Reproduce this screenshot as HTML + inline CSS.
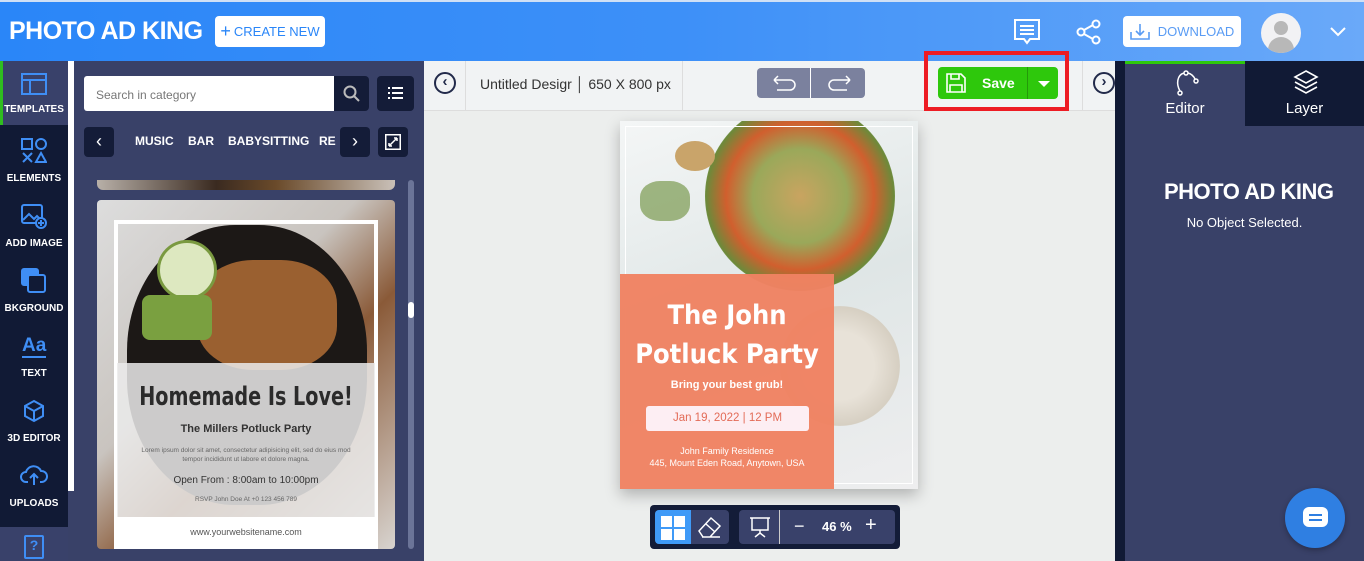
<!DOCTYPE html>
<html><head><meta charset="utf-8"><style>
*{box-sizing:border-box;margin:0;padding:0}
body{width:1364px;height:561px;overflow:hidden;font-family:"Liberation Sans",sans-serif;background:#eceeed;position:relative}
.a{position:absolute}
.hdr{left:0;top:0;width:1364px;height:61px;background:linear-gradient(90deg,#2a86f8 0%,#3d90f8 50%,#6aa9f9 100%);border-top:2px solid #cfe0f6}
.logo{color:#fff;font-weight:bold;font-size:25px;letter-spacing:-0.5px;font-family:"Liberation Sans",sans-serif;white-space:nowrap}
.btnw{background:#fff;border-radius:4px;color:#2a86f8;font-size:14px;display:flex;align-items:center;justify-content:center}
.side{left:0;top:61px;width:68px;height:500px;background:#111a35}
.si{position:absolute;left:0;width:68px;height:65px;color:#fff;font-size:10px;font-weight:bold;text-align:center}
.si svg{display:block;margin:12px auto 9px}
.panel{left:74px;top:61px;width:350px;height:500px;background:#394168}
.dk{background:#141c38;border-radius:4px}
.cat{color:#fff;font-size:12px;font-weight:bold}
</style></head><body>
<div class="a hdr"></div>
<div class="a logo" style="left:9px;top:17px">PHOTO AD KING</div>
<div class="a btnw" style="left:215px;top:16px;width:110px;height:31px;font-size:13px"><span style="font-size:18px;margin-right:3px">+</span>CREATE NEW</div>
<svg class="a" style="left:1013px;top:18px" width="28" height="28" viewBox="0 0 28 28" fill="none" stroke="#fff" stroke-width="2"><path d="M2 2h24v19H17l-3 4-3-4H2z"/><path d="M7 8h14M7 12h14M7 16h14"/></svg>
<svg class="a" style="left:1076px;top:19px" width="26" height="26" viewBox="0 0 26 26" fill="none" stroke="#fff" stroke-width="2"><circle cx="20" cy="5" r="3.5"/><circle cx="5" cy="13" r="3.5"/><circle cx="20" cy="21" r="3.5"/><path d="M8 11l9-5M8 15l9 5"/></svg>
<div class="a btnw" style="left:1123px;top:16px;width:118px;height:31px;color:#5a9cf4;font-size:13px"><svg width="20" height="18" viewBox="0 0 20 18" fill="none" stroke="#5a9cf4" stroke-width="1.6" style="margin-right:8px"><path d="M1 9v7h18V9M10 1v11M6 8l4 4 4-4"/></svg>DOWNLOAD</div>
<div class="a" style="left:1261px;top:13px;width:40px;height:40px;border-radius:50%;background:#f2f2f4;overflow:hidden"><div class="a" style="left:13px;top:8px;width:14px;height:14px;border-radius:50%;background:#b8b8b8"></div><div class="a" style="left:7px;top:24px;width:26px;height:18px;border-radius:13px 13px 0 0;background:#b8b8b8"></div></div>
<svg class="a" style="left:1330px;top:27px" width="16" height="10" viewBox="0 0 16 10" fill="none" stroke="#fff" stroke-width="2"><path d="M1 1l7 7 7-7"/></svg>

<div class="a side"></div>
<div class="a" style="left:0;top:61px;width:68px;height:64px;background:#39416a;border-left:3px solid #2fbd1f"></div>
<div class="si" style="top:61px"><svg width="26" height="22" viewBox="0 0 26 22" fill="none" stroke="#3f8ef5" stroke-width="2"><rect x="1" y="1" width="24" height="20"/><path d="M1 7h24M9 7v14"/></svg>TEMPLATES</div>
<div class="si" style="top:126px"><svg width="26" height="26" viewBox="0 0 26 26" fill="none" stroke="#3f8ef5" stroke-width="2"><rect x="1" y="1" width="10" height="10"/><circle cx="20" cy="6" r="5"/><path d="M2 15l9 9M11 15l-9 9M20 15l5 9h-10z"/></svg>ELEMENTS</div>
<div class="si" style="top:191px"><svg width="26" height="26" viewBox="0 0 26 26" fill="none" stroke="#3f8ef5" stroke-width="2"><rect x="1" y="2" width="20" height="18" rx="2"/><path d="M2 17l6-6 5 5 3-3 5 5"/><circle cx="20" cy="20" r="5" fill="#111a35"/><path d="M20 17v6M17 20h6"/></svg>ADD IMAGE</div>
<div class="si" style="top:256px"><svg width="26" height="26" viewBox="0 0 26 26" fill="none" stroke="#3f8ef5" stroke-width="2"><rect x="1" y="1" width="16" height="16" rx="2" fill="#3f8ef5"/><rect x="7" y="7" width="17" height="17" rx="2" fill="#111a35"/></svg>BKGROUND</div>
<div class="si" style="top:321px"><svg width="26" height="26" viewBox="0 0 26 26"><text x="1" y="18" fill="#3f8ef5" font-size="19" font-family="Liberation Sans">Aa</text><path d="M1 24h24" stroke="#3f8ef5" stroke-width="2"/></svg>TEXT</div>
<div class="si" style="top:386px"><svg width="26" height="26" viewBox="0 0 26 26" fill="none" stroke="#3f8ef5" stroke-width="2"><path d="M13 3l9 5v10l-9 5-9-5V8zM4 8l9 5 9-5M13 13v10"/></svg>3D EDITOR</div>
<div class="si" style="top:451px"><svg width="28" height="26" viewBox="0 0 28 26" fill="none" stroke="#3f8ef5" stroke-width="2"><path d="M8 19H6a5 5 0 010-10 8 8 0 0115-1 5 5 0 011 11h-2M14 22V11M10 15l4-4 4 4"/></svg>UPLOADS</div>
<div class="a" style="left:0;top:527px;width:68px;height:34px;background:#39416a"></div>
<div class="a" style="left:24px;top:535px;width:20px;height:24px;border:2px solid #3f8ef5;border-radius:2px;color:#3f8ef5;font-size:14px;font-weight:bold;text-align:center">?</div>
<div class="a" style="left:68px;top:61px;width:6px;height:430px;background:#fff"></div>
<div class="a" style="left:68px;top:491px;width:6px;height:70px;background:#394168"></div>

<div class="a panel"></div>
<div class="a" style="left:84px;top:76px;width:250px;height:35px;background:#fff;border-radius:3px 0 0 3px;color:#777;font-size:12px;padding:12px 12px">Search in category</div>
<div class="a dk" style="left:334px;top:76px;width:35px;height:35px;border-radius:0 4px 4px 0"><svg style="margin:9px" width="17" height="17" viewBox="0 0 17 17" fill="none" stroke="#bbb" stroke-width="2"><circle cx="7" cy="7" r="5.5"/><path d="M11 11l5 5"/></svg></div>
<div class="a dk" style="left:377px;top:76px;width:37px;height:35px"><svg style="margin:11px 11px" width="15" height="13" viewBox="0 0 15 13" fill="#fff"><rect x="0" y="0" width="2" height="2"/><rect x="4" y="0" width="11" height="2"/><rect x="0" y="5" width="2" height="2"/><rect x="4" y="5" width="11" height="2"/><rect x="0" y="10" width="2" height="2"/><rect x="4" y="10" width="11" height="2"/></svg></div>
<div class="a dk" style="left:84px;top:127px;width:30px;height:30px;color:#fff;font-size:18px;text-align:center;line-height:28px">‹</div>
<div class="a cat" style="left:135px;top:134px">MUSIC</div>
<div class="a cat" style="left:188px;top:134px">BAR</div>
<div class="a cat" style="left:228px;top:134px">BABYSITTING</div>
<div class="a cat" style="left:319px;top:134px">RE</div>
<div class="a dk" style="left:340px;top:127px;width:30px;height:30px;color:#fff;font-size:18px;text-align:center;line-height:28px">›</div>
<div class="a dk" style="left:378px;top:127px;width:30px;height:30px"><svg style="margin:7px" width="16" height="16" viewBox="0 0 16 16" fill="none" stroke="#fff" stroke-width="1.5"><rect x="0.75" y="0.75" width="14.5" height="14.5"/><path d="M4 12l8-8M4 12v-3M4 12h3M12 4h-3M12 4v3"/></svg></div>
<div class="a" style="left:97px;top:180px;width:298px;height:10px;border-radius:0 0 6px 6px;background:linear-gradient(90deg,#b8b0a8,#3a2a20 40%,#6a4a2a 60%,#c9c0b8)"></div>
<div class="a" style="left:97px;top:200px;width:298px;height:349px;border-radius:4px;overflow:hidden;background:linear-gradient(135deg,#ddd 0%,#c9c4bf 40%,#8a5a38 60%,#d8d4d0 100%)">
 <div class="a" style="left:30px;top:25px;width:240px;height:280px;border-radius:45%;background:#1c1816"></div>
 <div class="a" style="left:100px;top:60px;width:140px;height:110px;border-radius:40%;background:#9a6030"></div>
 <div class="a" style="left:60px;top:40px;width:60px;height:60px;border-radius:50%;background:#dde8c0;border:3px solid #7a9a40"></div>
 <div class="a" style="left:45px;top:95px;width:70px;height:45px;background:#7aa040;border-radius:8px"></div>
 <div class="a" style="left:17px;top:20px;width:264px;height:329px;border:4px solid #fff;border-bottom:none"></div>
 <div class="a" style="left:20px;top:163px;width:258px;height:154px;background:rgba(235,235,235,.85)"></div>
 <div class="a" style="left:20px;top:317px;width:258px;height:32px;background:#fff"></div>
 <div class="a" style="left:0;top:182px;width:298px;text-align:center;font-family:'DejaVu Sans Condensed','Liberation Sans Narrow',sans-serif;font-weight:bold;font-size:26px;color:#2b2b2b;transform:scaleX(.82)">Homemade Is Love!</div>
 <div class="a" style="left:0;top:223px;width:298px;text-align:center;font-size:11px;color:#333;font-weight:bold">The Millers Potluck Party</div>
 <div class="a" style="left:40px;top:246px;width:218px;text-align:center;font-size:6.5px;color:#666;line-height:9px">Lorem ipsum dolor sit amet, consectetur adipisicing elit, sed do eius mod tempor incididunt ut labore et dolore magna.</div>
 <div class="a" style="left:0;top:275px;width:298px;text-align:center;font-size:10px;color:#333">Open From : 8:00am to 10:00pm</div>
 <div class="a" style="left:0;top:296px;width:298px;text-align:center;font-size:6.5px;color:#666">RSVP John Doe At +0 123 456 789</div>
 <div class="a" style="left:0;top:327px;width:298px;text-align:center;font-size:9px;color:#555">www.yourwebsitename.com</div>
</div>
<div class="a" style="left:408px;top:180px;width:6px;height:369px;border-radius:3px;background:#6b7498"></div>
<div class="a" style="left:408px;top:302px;width:6px;height:16px;border-radius:3px;background:#fff"></div>

<div class="a" style="left:424px;top:61px;width:691px;height:50px;background:#f1f3f4;border-bottom:1px solid #ddd"></div>
<div class="a" style="left:465px;top:61px;width:1px;height:50px;background:#ddd"></div>
<div class="a" style="left:682px;top:61px;width:1px;height:50px;background:#ddd"></div>
<div class="a" style="left:1082px;top:61px;width:1px;height:50px;background:#ddd"></div>
<div class="a" style="left:434px;top:72px;width:22px;height:22px;border:2px solid #222a4a;border-radius:50%;font-size:15px;line-height:16px;text-align:center;color:#222a4a;font-weight:bold">‹</div>
<div class="a" style="left:1093px;top:72px;width:22px;height:22px;border:2px solid #222a4a;border-radius:50%;font-size:15px;line-height:16px;text-align:center;color:#222a4a;font-weight:bold">›</div>
<div class="a" style="left:480px;top:76px;font-size:14px;color:#333">Untitled Desigr │ 650 X 800 px</div>
<div class="a" style="left:757px;top:68px;width:108px;height:30px;background:#7b819e;border-radius:4px"></div>
<div class="a" style="left:810px;top:68px;width:1px;height:30px;background:#fff"></div>
<svg class="a" style="left:772px;top:75px" width="80" height="16" viewBox="0 0 80 16" fill="none" stroke="#fff" stroke-width="1.5"><path d="M2 5h16a5 5 0 010 10H5M2 5l4-4M2 5l4 4"/><path d="M78 5H62a5 5 0 000 10h13M78 5l-4-4M78 5l-4 4"/></svg>
<div class="a" style="left:924px;top:51px;width:145px;height:60px;border:4px solid #ed1c24"></div>
<div class="a" style="left:938px;top:67px;width:120px;height:32px;background:#2ec80c;border-radius:4px"></div>
<div class="a" style="left:1027px;top:67px;width:1px;height:32px;background:#249a0a"></div>
<svg class="a" style="left:946px;top:73px" width="20" height="20" viewBox="0 0 20 20" fill="none" stroke="#fff" stroke-width="1.6"><path d="M1 1h14l4 4v14H1z"/><path d="M5 1v5h8V1M4 19v-7h12v7"/></svg>
<div class="a" style="left:982px;top:75px;font-size:14px;font-weight:bold;color:#fff">Save</div>
<div class="a" style="left:1038px;top:81px;border-left:6px solid transparent;border-right:6px solid transparent;border-top:6px solid #fff"></div>

<div class="a" style="left:620px;top:121px;width:298px;height:368px;box-shadow:0 6px 14px rgba(0,0,0,.25);overflow:hidden;background:linear-gradient(160deg,#f4f6f6,#dfe6e6 50%,#eeeeef)">
 <div class="a" style="left:85px;top:-20px;width:190px;height:190px;border-radius:50%;background:radial-gradient(circle,#c9a460 0%,#9aa85a 35%,#d15f2e 55%,#6c8a3a 70%,#e9e6e0 76%,#5a74b0 78%,#e7e3df 80%)"></div>
 <div class="a" style="left:20px;top:60px;width:50px;height:40px;border-radius:40%;background:#7a9a50;opacity:.7"></div>
 <div class="a" style="left:55px;top:20px;width:40px;height:30px;border-radius:50%;background:#c9a46a"></div>
 <div class="a" style="left:160px;top:185px;width:120px;height:120px;border-radius:50%;background:radial-gradient(circle,#e8e2d8 40%,#d6cfc2 70%,transparent 72%)"></div>
 <div class="a" style="left:5px;top:5px;width:288px;height:358px;border:1.5px solid #fff"></div>
 <div class="a" style="left:0;top:153px;width:214px;height:215px;background:#f08262;opacity:.97"></div>
 <div class="a" style="left:0;top:175px;width:214px;text-align:center;color:#fff;font-weight:bold;font-size:27px;line-height:39px;font-family:'DejaVu Sans Condensed','Liberation Sans Narrow',sans-serif">The John<br>Potluck Party</div>
 <div class="a" style="left:0;top:258px;width:214px;text-align:center;color:#fff;font-weight:bold;font-size:11px">Bring your best grub!</div>
 <div class="a" style="left:26px;top:285px;width:163px;height:25px;background:#fdeef3;border-radius:3px;text-align:center;color:#e36b57;font-size:11.5px;line-height:25px">Jan 19, 2022 | 12 PM</div>
 <div class="a" style="left:0;top:324px;width:214px;text-align:center;color:#fff;font-size:9px;line-height:12px">John Family Residence<br>445, Mount Eden Road, Anytown, USA</div>
</div>

<div class="a" style="left:650px;top:505px;width:250px;height:44px;background:#131c38;border-radius:4px"></div>
<div class="a" style="left:655px;top:510px;width:74px;height:34px;background:#39416a;border-radius:4px"></div>
<div class="a" style="left:655px;top:510px;width:36px;height:34px;background:#3f9af7;border-radius:4px 0 0 4px"></div>
<svg class="a" style="left:661px;top:516px" width="24" height="24" viewBox="0 0 24 24" fill="#fff"><rect x="0" y="0" width="11" height="11"/><rect x="13" y="0" width="11" height="11"/><rect x="0" y="13" width="11" height="11"/><rect x="13" y="13" width="11" height="11"/></svg>
<svg class="a" style="left:697px;top:515px" width="26" height="24" viewBox="0 0 26 24" fill="none" stroke="#fff" stroke-width="1.5"><path d="M2 16L14 3l9 8-10 11H6zM9 9l9 8M5 22h18"/></svg>
<div class="a" style="left:739px;top:510px;width:156px;height:34px;background:#39416a;border-radius:4px"></div>
<div class="a" style="left:779px;top:510px;width:1px;height:34px;background:#ccc"></div>
<svg class="a" style="left:749px;top:516px" width="22" height="22" viewBox="0 0 22 22" fill="none" stroke="#fff" stroke-width="1.5"><path d="M1 2h20M3 2v12h16V2M11 14v3M11 17l-5 4M11 17l5 4"/></svg>
<div class="a" style="left:794px;top:516px;color:#fff;font-size:18px">−</div>
<div class="a" style="left:822px;top:519px;color:#fff;font-size:13px;font-weight:bold">46 %</div>
<div class="a" style="left:865px;top:514px;color:#fff;font-size:20px">+</div>

<div class="a" style="left:1115px;top:61px;width:10px;height:500px;background:#111a35"></div>
<div class="a" style="left:1125px;top:61px;width:239px;height:500px;background:#394168"></div>
<div class="a" style="left:1125px;top:61px;width:120px;height:3px;background:#2ec80c"></div>
<div class="a" style="left:1245px;top:61px;width:119px;height:65px;background:#111a35"></div>
<svg class="a" style="left:1173px;top:70px" width="26" height="26" viewBox="0 0 26 26" fill="none" stroke="#fff" stroke-width="1.5"><circle cx="13" cy="3" r="2"/><circle cx="23" cy="11" r="2"/><circle cx="7" cy="23" r="2"/><path d="M11 3C4 5 3 14 7 21M15 3c4 1 6 4 7 6"/></svg>
<div class="a" style="left:1125px;top:100px;width:120px;text-align:center;color:#fff;font-size:15px">Editor</div>
<svg class="a" style="left:1293px;top:69px" width="26" height="26" viewBox="0 0 26 26" fill="none" stroke="#fff" stroke-width="1.6"><path d="M13 2l11 6-11 6-11-6zM2 13l11 6 11-6M2 18l11 6 11-6"/></svg>
<div class="a" style="left:1245px;top:100px;width:119px;text-align:center;color:#fff;font-size:15px">Layer</div>
<div class="a logo" style="left:1164px;top:179px;font-size:22px">PHOTO AD KING</div>
<div class="a" style="left:1125px;top:215px;width:239px;text-align:center;color:#fff;font-size:13px">No Object Selected.</div>
<div class="a" style="left:1285px;top:488px;width:60px;height:60px;border-radius:50%;background:#2f7fe2;box-shadow:0 2px 6px rgba(0,0,0,.3)"></div>
<div class="a" style="left:1303px;top:507px;width:25px;height:20px;background:#fff;border-radius:6px"></div>
<div class="a" style="left:1309px;top:514px;width:13px;height:2px;background:#2f7fe2"></div>
<div class="a" style="left:1309px;top:519px;width:13px;height:2px;background:#2f7fe2"></div>
</body></html>
